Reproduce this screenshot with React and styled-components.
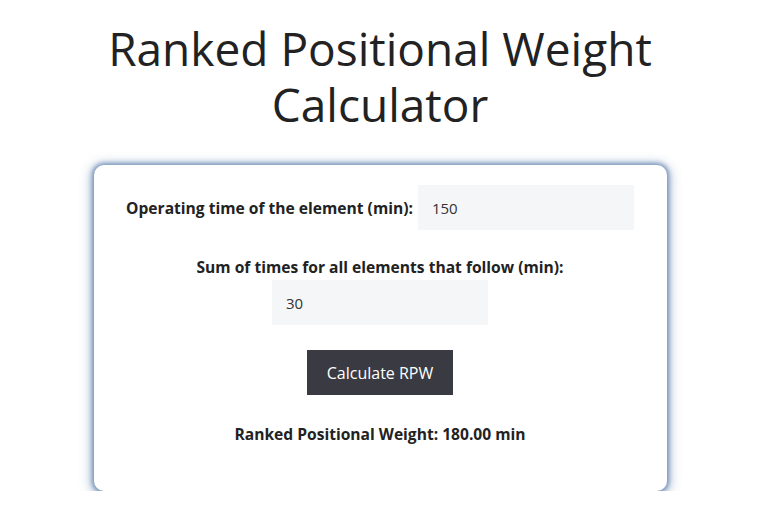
import styled, { createGlobalStyle } from "styled-components";

const GlobalStyle = createGlobalStyle`
  body {
    margin: 0;
    background: #ffffff;
    font-family: "Open Sans", "Noto Sans", sans-serif;
    color: #222222;
  }
`;

export default function App() {
  return (
    <>
      <GlobalStyle />
      <Page>
        <Title>Ranked Positional Weight Calculator</Title>
        <Card>
          <Field>
            <Label>Operating time of the element (min):</Label>
            <Input type="text" defaultValue="150" />
          </Field>
          <Field $spaced>
            <Label>Sum of times for all elements that follow (min):</Label>
            <Input type="text" defaultValue="30" />
          </Field>
          <Button>Calculate RPW</Button>
          <Result>Ranked Positional Weight: 180.00 min</Result>
        </Card>
      </Page>
    </>
  );
}

const Page = styled.div`
  display: flex;
  flex-direction: column;
  align-items: center;
  padding: 20px 8px 0 0;
`;

const Title = styled.h1`
  margin: 0 0 33px;
  width: 600px;
  text-align: center;
  font-size: 46px;
  font-weight: 400;
  line-height: 56px;
  color: #222222;
`;

const Card = styled.div`
  box-sizing: border-box;
  width: 573px;
  padding: 20px 20px 46px;
  background: #ffffff;
  border-radius: 10px;
  box-shadow: 0 0 4px 2px rgba(70, 110, 160, 0.6),
    0 2px 12px 3px rgba(70, 110, 160, 0.45);
  display: flex;
  flex-direction: column;
  align-items: center;
`;

const Field = styled.div`
  display: flex;
  flex-wrap: wrap;
  justify-content: center;
  align-items: center;
  column-gap: 5px;
  row-gap: 2px;
  margin-top: ${({ $spaced }) => ($spaced ? "26px" : "0")};
`;

const Label = styled.label`
  font-size: 15.6px;
  font-weight: 700;
  color: #222222;
`;

const Input = styled.input`
  box-sizing: border-box;
  width: 216px;
  height: 45px;
  padding: 0 14px;
  border: none;
  background: #f5f6f8;
  font-family: inherit;
  font-size: 15px;
  color: #333333;
  outline: none;
`;

const Button = styled.button`
  margin-top: 25px;
  width: 146px;
  height: 45px;
  border: none;
  background: #3a3a42;
  color: #ffffff;
  font-family: inherit;
  font-size: 16px;
  cursor: pointer;
`;

const Result = styled.p`
  margin: 28px 0 0;
  font-size: 15.6px;
  font-weight: 700;
  color: #222222;
`;
